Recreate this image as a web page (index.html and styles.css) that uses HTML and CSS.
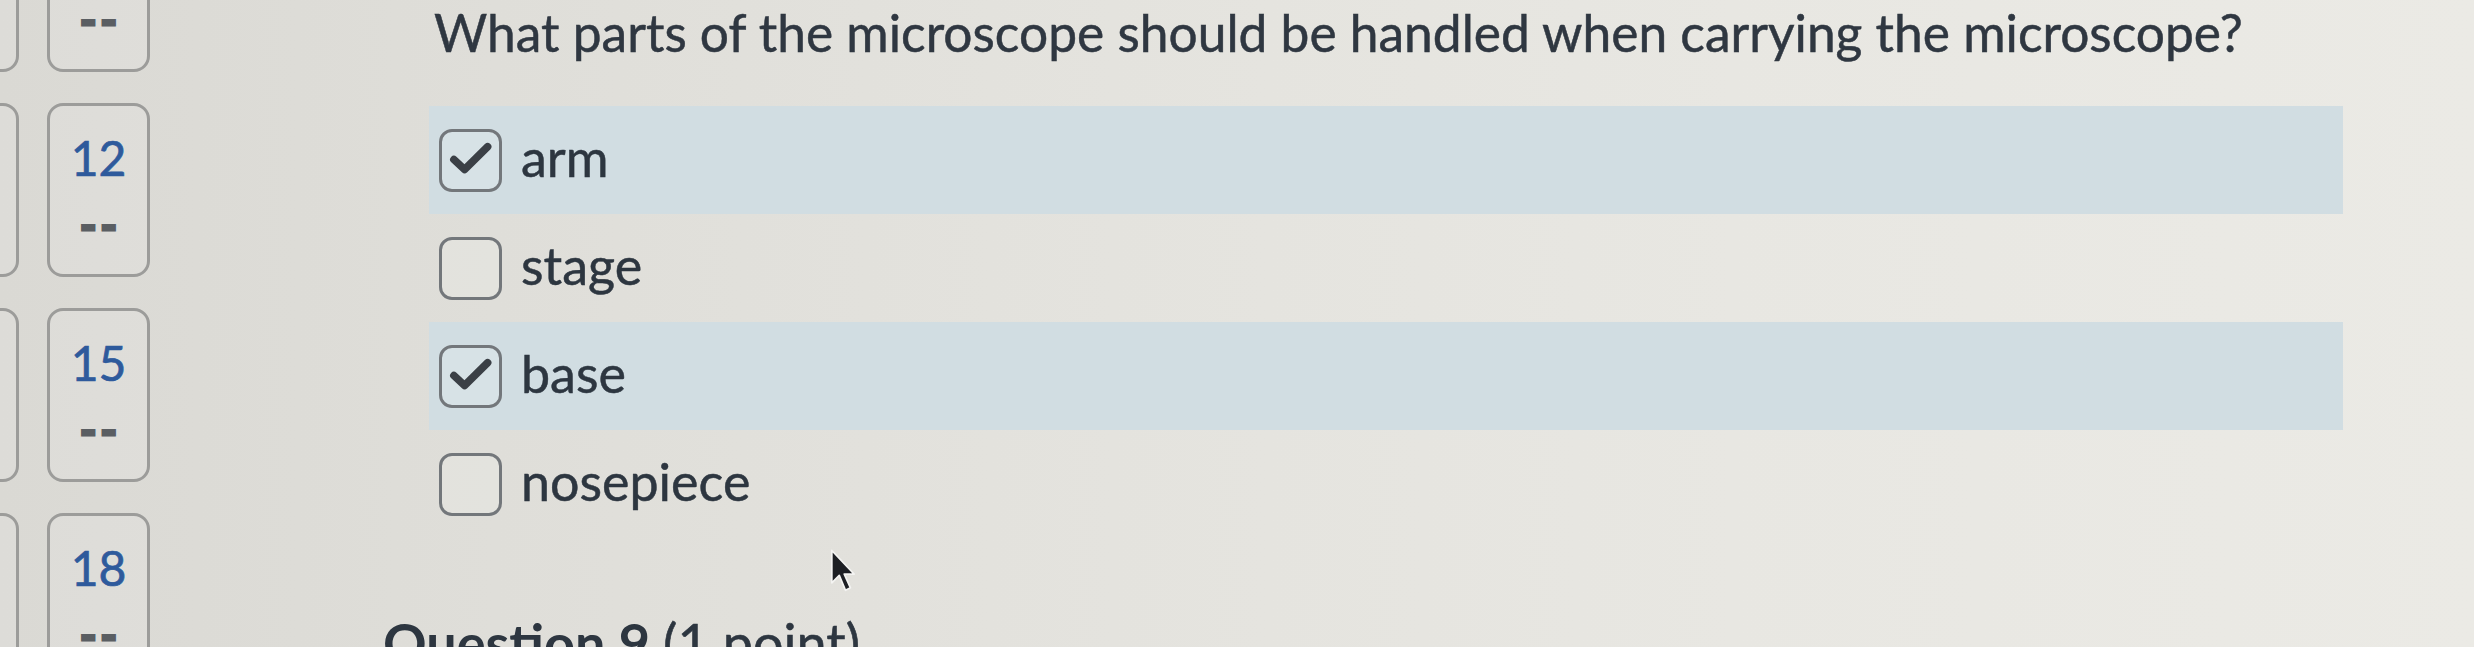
FILE: index.html
```html
<!DOCTYPE html>
<html lang="en">
<head>
<meta charset="utf-8">
<title>Quiz question</title>
<link rel="stylesheet" href="styles.css">
</head>
<body>
<div class="page">
  <nav class="qnav">
    <div class="tile partial"></div>
    <div class="tile"><span class="num empty"></span><span class="dash">--</span></div>
    <div class="tile partial"></div>
    <div class="tile"><span class="num">12</span><span class="dash">--</span></div>
    <div class="tile partial"></div>
    <div class="tile"><span class="num">15</span><span class="dash">--</span></div>
    <div class="tile partial"></div>
    <div class="tile"><span class="num">18</span><span class="dash">--</span></div>
  </nav>
  <main class="main">
    <section class="question">
      <h2 class="qtext">What parts of the microscope should be handled when carrying the microscope?</h2>
      <ul class="answers">
        <li class="answer checked">
          <span class="box"><svg viewBox="0 0 24 24"><path d="M5 11.8 L9.5 16 L19.2 6.4"/></svg></span>
          <span class="label">arm</span>
        </li>
        <li class="answer">
          <span class="box"></span>
          <span class="label">stage</span>
        </li>
        <li class="answer checked">
          <span class="box"><svg viewBox="0 0 24 24"><path d="M5 11.8 L9.5 16 L19.2 6.4"/></svg></span>
          <span class="label">base</span>
        </li>
        <li class="answer">
          <span class="box"></span>
          <span class="label">nosepiece</span>
        </li>
      </ul>
    </section>
    <h2 class="qhead">Question 9 <span class="pts">(1 point)</span></h2>
  </main>
  <svg class="cursor" viewBox="0 0 22 37"><path d="M2 2 L2 28 L8 22 L13 34 L17 32 L12 21 L20 21 Z"/></svg>
</div>
</body>
</html>
```
FILE: styles.css
```css
html, body {
  margin: 0;
  padding: 0;
}
body {
  width: 2474px;
  height: 647px;
  overflow: hidden;
  font-family: Lato, "Noto Sans", sans-serif;
  color: #2f3943;
}
.page {
  position: relative;
  display: flex;
  width: 2474px;
  height: 647px;
  overflow: hidden;
  background: linear-gradient(90deg, #dad9d4 0%, #dfded9 20%, #e4e3de 45%, #e8e7e2 70%, #ebeae5 100%);
}
.qnav {
  flex: none;
  display: grid;
  grid-template-columns: 103px 103px;
  grid-auto-rows: 174px;
  column-gap: 28px;
  row-gap: 31px;
  margin-left: -84px;
  margin-top: -102px;
  align-content: start;
}
.tile {
  box-sizing: border-box;
  border: 3px solid #9c9c9a;
  border-radius: 16px;
  background: rgba(255, 255, 255, 0.1);
  display: flex;
  flex-direction: column;
  align-items: center;
  padding-top: 26px;
}
.num {
  display: block;
  height: 52px;
  font-size: 48px;
  line-height: 52px;
  color: #2e5a9c;
  -webkit-text-stroke: 0.7px #2e5a9c;
}
.dash {
  display: block;
  margin-top: 18px;
  font-size: 44px;
  line-height: 44px;
  font-weight: 700;
  letter-spacing: 4px;
  color: #5a5e62;
  -webkit-text-stroke: 3px #5a5e62;
  padding-left: 4px;
}
.main {
  flex: none;
  width: 1960px;
  margin-left: 233px;
}
.question {
  padding-left: 46px;
}
.qtext {
  margin: 2px 0 0 0;
  padding-left: 5px;
  font-size: 51.5px;
  line-height: 61px;
  font-weight: 400;
  color: #2f3741;
  white-space: nowrap;
  -webkit-text-stroke: 0.5px #2f3741;
}
.answers {
  list-style: none;
  margin: 43px 0 0 0;
  padding: 0;
}
.answer {
  height: 108px;
  display: flex;
  align-items: center;
  padding-left: 10px;
  gap: 19px;
}
.answer.checked {
  background: #d1dde2;
}
.box {
  flex: none;
  box-sizing: border-box;
  width: 63px;
  height: 63px;
  border: 3px solid #73777b;
  border-radius: 13px;
  background: rgba(255, 255, 255, 0.15);
  display: flex;
  align-items: center;
  justify-content: center;
}
.box svg {
  width: 58px;
  height: 58px;
  fill: none;
  stroke: #3b4046;
  stroke-width: 3.2;
  stroke-linecap: round;
  stroke-linejoin: round;
}
.label {
  font-size: 52px;
  line-height: 64px;
  color: #2d3640;
  margin-top: -6px;
  -webkit-text-stroke: 0.5px #2d3640;
}
.qhead {
  margin: 72px 0 0 0;
  font-size: 54px;
  line-height: 65px;
  font-weight: 700;
  color: #2d3640;
  white-space: nowrap;
}
.pts {
  font-weight: 400;
  -webkit-text-stroke: 0.6px #2d3640;
}
.cursor {
  position: absolute;
  left: 829px;
  top: 548px;
  width: 28px;
  height: 46px;
}
.cursor path {
  fill: #1d1f24;
  stroke: #f4f4f2;
  stroke-width: 1.4;
  stroke-linejoin: round;
}
```
